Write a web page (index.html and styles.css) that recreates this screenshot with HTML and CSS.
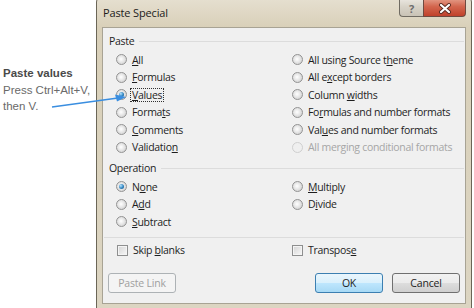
FILE: index.html
```html
<!DOCTYPE html>
<html lang="en">
<head>
  <meta charset="UTF-8" />
  <title>Paste Special</title>
  <link rel="stylesheet" href="styles.css">
</head>
<body>
  <div class="note">
    <div class="note-title">Paste values</div>
    <div>Press Ctrl+Alt+V,</div>
    <div>then V.</div>
  </div>

  <div class="dialog">
    <div class="titlebar">
      <div class="title">Paste Special</div>
      <div class="caption-buttons">
        <div class="cap-help"><span>?</span></div>
        <div class="cap-close">
          <svg width="14" height="11" viewBox="0 0 14 11">
            <path d="M3 2 L11 9 M11 2 L3 9" stroke="#5a2a20" stroke-width="4" stroke-linecap="round" />
            <path d="M3 2 L11 9 M11 2 L3 9" stroke="#fff" stroke-width="2.2" stroke-linecap="round" />
          </svg>
        </div>
      </div>
    </div>

    <div class="client">
      <div class="group-head"><span>Paste</span><i></i></div>
      <div class="options">
        <div class="opt"><span class="radio"></span><span><u>A</u>ll</span></div>
        <div class="opt"><span class="radio"></span><span>All using Source t<u>h</u>eme</span></div>
        <div class="opt"><span class="radio"></span><span><u>F</u>ormulas</span></div>
        <div class="opt"><span class="radio"></span><span>All e<u>x</u>cept borders</span></div>
        <div class="opt"><span class="radio on"></span><span class="focus"><u>V</u>alues</span></div>
        <div class="opt"><span class="radio"></span><span>Column <u>w</u>idths</span></div>
        <div class="opt"><span class="radio"></span><span>Forma<u>t</u>s</span></div>
        <div class="opt"><span class="radio"></span><span>Fo<u>r</u>mulas and number formats</span></div>
        <div class="opt"><span class="radio"></span><span><u>C</u>omments</span></div>
        <div class="opt"><span class="radio"></span><span>Val<u>u</u>es and number formats</span></div>
        <div class="opt"><span class="radio"></span><span>Validatio<u>n</u></span></div>
        <div class="opt disabled"><span class="radio"></span><span>All merging conditional formats</span></div>
      </div>

      <div class="group-head op"><span>Operation</span><i></i></div>
      <div class="options">
        <div class="opt"><span class="radio on"></span><span>N<u>o</u>ne</span></div>
        <div class="opt"><span class="radio"></span><span><u>M</u>ultiply</span></div>
        <div class="opt"><span class="radio"></span><span>A<u>d</u>d</span></div>
        <div class="opt"><span class="radio"></span><span>D<u>i</u>vide</span></div>
        <div class="opt"><span class="radio"></span><span><u>S</u>ubtract</span></div>
      </div>

      <div class="divider"></div>

      <div class="options checks">
        <div class="opt"><span class="check"></span><span>Skip <u>b</u>lanks</span></div>
        <div class="opt"><span class="check"></span><span>Transpos<u>e</u></span></div>
      </div>

      <div class="footer">
        <button class="btn" disabled>Paste Link</button>
        <div class="spacer"></div>
        <button class="btn default">OK</button>
        <button class="btn">Cancel</button>
      </div>
    </div>
  </div>

  <svg class="arrow" width="474" height="308" viewBox="0 0 474 308">
    <line x1="52" y1="107" x2="118" y2="98" stroke="#3a8ee0" stroke-width="1.6" />
    <path d="M126 97 L115 94.5 L117 101.5 Z" fill="#3a8ee0" />
  </svg>
</body>
</html>
```

FILE: styles.css
```css
body {
  margin: 0;
  width: 474px;
  height: 308px;
  overflow: hidden;
  background: #fff;
  display: flex;
  position: relative;
  font-family: "Open Sans", "Noto Sans", sans-serif;
}

/* Annotation on the left */
.note {
  width: 93px;
  padding: 65px 0 0 3px;
  font-family: "Liberation Sans", Arial, sans-serif;
  font-size: 11.5px;
  line-height: 16.5px;
  color: #6a6a6a;
}

.note-title {
  font-weight: bold;
  color: #4a4a4a;
}

.arrow {
  position: absolute;
  left: 0;
  top: 0;
  pointer-events: none;
}

/* Dialog frame */
.dialog {
  width: 364px;
  height: 307px;
  margin-top: -4px;
  padding: 0 5px 6px;
  border: 1px solid #6b6657;
  border-radius: 6px 6px 3px 3px;
  background: linear-gradient(to bottom, #e6e0d1 0, #d9d0b9 30px, #dcd5c2 100%);
  display: flex;
  flex-direction: column;
}

.titlebar {
  height: 30px;
  display: flex;
  align-items: flex-start;
  flex-shrink: 0;
}

.title {
  padding: 8px 0 0 1px;
  font-size: 11px;
  letter-spacing: -0.15px;
  line-height: 16px;
  color: #1b1b1b;
}

.caption-buttons {
  margin-left: auto;
  display: flex;
  height: 20px;
}

.cap-help {
  width: 24px;
  border: 1px solid #6f6b62;
  border-top: none;
  border-right: none;
  border-radius: 0 0 0 4px;
  background: linear-gradient(to bottom, #efece6, #d8d3c8 50%, #c9c3b6);
  color: #6d6d6d;
  font-size: 11px;
  font-weight: bold;
  display: flex;
  align-items: center;
  justify-content: center;
  padding-top: 3px;
  box-sizing: border-box;
}

.cap-close {
  width: 43px;
  border: 1px solid #6f4a40;
  border-top: none;
  border-radius: 0 0 4px 0;
  background: linear-gradient(to bottom, #e8a996, #d3664e 50%, #c0412b);
  display: flex;
  align-items: center;
  justify-content: center;
  padding-top: 3px;
  box-sizing: border-box;
}

/* Client area */
.client {
  flex-grow: 1;
  background: #f0f0f0;
  border: 1px solid #a8a394;
  display: flex;
  flex-direction: column;
  padding: 0 1px 4px 0;
  font-size: 10.5px;
  letter-spacing: -0.3px;
  color: #1e1e1e;
}

.group-head {
  margin-top: 6px;
  padding-left: 6px;
  height: 14px;
  display: flex;
  align-items: center;
  line-height: 14px;
}

.group-head.op {
  margin-top: 5px;
}

.group-head i {
  flex-grow: 1;
  height: 1px;
  margin-left: 5px;
  background: #dcdcdc;
}

.options {
  margin-top: 3px;
  padding-left: 13px;
  display: grid;
  grid-template-columns: 176px 1fr;
  grid-auto-rows: 17.5px;
}

.opt {
  display: flex;
  align-items: center;
  white-space: nowrap;
}

.opt u {
  text-decoration-thickness: 1px;
  text-underline-offset: 1px;
}

.opt.disabled {
  color: #a6a6a6;
}

.radio {
  width: 11px;
  height: 11px;
  margin-right: 5px;
  border: 1px solid #939393;
  border-radius: 50%;
  box-sizing: border-box;
  background: radial-gradient(circle at 45% 45%, #ffffff 0, #ececec 35%, #c6c6c6 100%);
  position: relative;
  flex-shrink: 0;
}

.radio.on::after {
  content: "";
  position: absolute;
  left: 2px;
  top: 2px;
  width: 5px;
  height: 5px;
  border-radius: 50%;
  background: radial-gradient(circle at 35% 35%, #b8e4ff 0, #2f84c0 55%, #1a4f78 100%);
}

.disabled .radio {
  border-color: #cfcfcf;
  background: #efefef;
}

.focus {
  margin-left: -2px;
  padding: 0 1px;
  border: 1px dotted #303030;
  line-height: 12px;
}

.divider {
  margin: 6px 0 0 1px;
  height: 1px;
  background: #dcdcdc;
}

.checks {
  margin-top: 4px;
  padding-left: 14px;
  grid-template-columns: 175px 1fr;
}

.check {
  width: 11px;
  height: 11px;
  margin-right: 5px;
  box-sizing: border-box;
  border: 1px solid #8e8f8f;
  background: linear-gradient(to bottom right, #d4d4d4, #f8f8f8);
  box-shadow: inset 0 0 0 1px #f4f4f4;
  flex-shrink: 0;
}

.footer {
  margin-top: 14px;
  padding: 0 4px 0 5px;
  display: flex;
  gap: 9px;
}

.spacer {
  flex-grow: 1;
}

.btn {
  width: 68px;
  height: 20px;
  padding: 0;
  border: 1px solid #707070;
  border-radius: 3px;
  background: linear-gradient(to bottom, #f2f2f2 0, #ebebeb 50%, #dddddd 51%, #cfcfcf 100%);
  font-family: inherit;
  font-size: 10.5px;
  letter-spacing: -0.2px;
  color: #1e1e1e;
}

.btn.default {
  border-color: #3c7fb1;
  background: linear-gradient(to bottom, #eaf6fd 0, #d9f0fc 50%, #bee6fd 51%, #a7d9f5 100%);
}

.btn:disabled {
  border-color: #adb2b5;
  background: #f4f4f4;
  color: #a0a0a0;
}
```
